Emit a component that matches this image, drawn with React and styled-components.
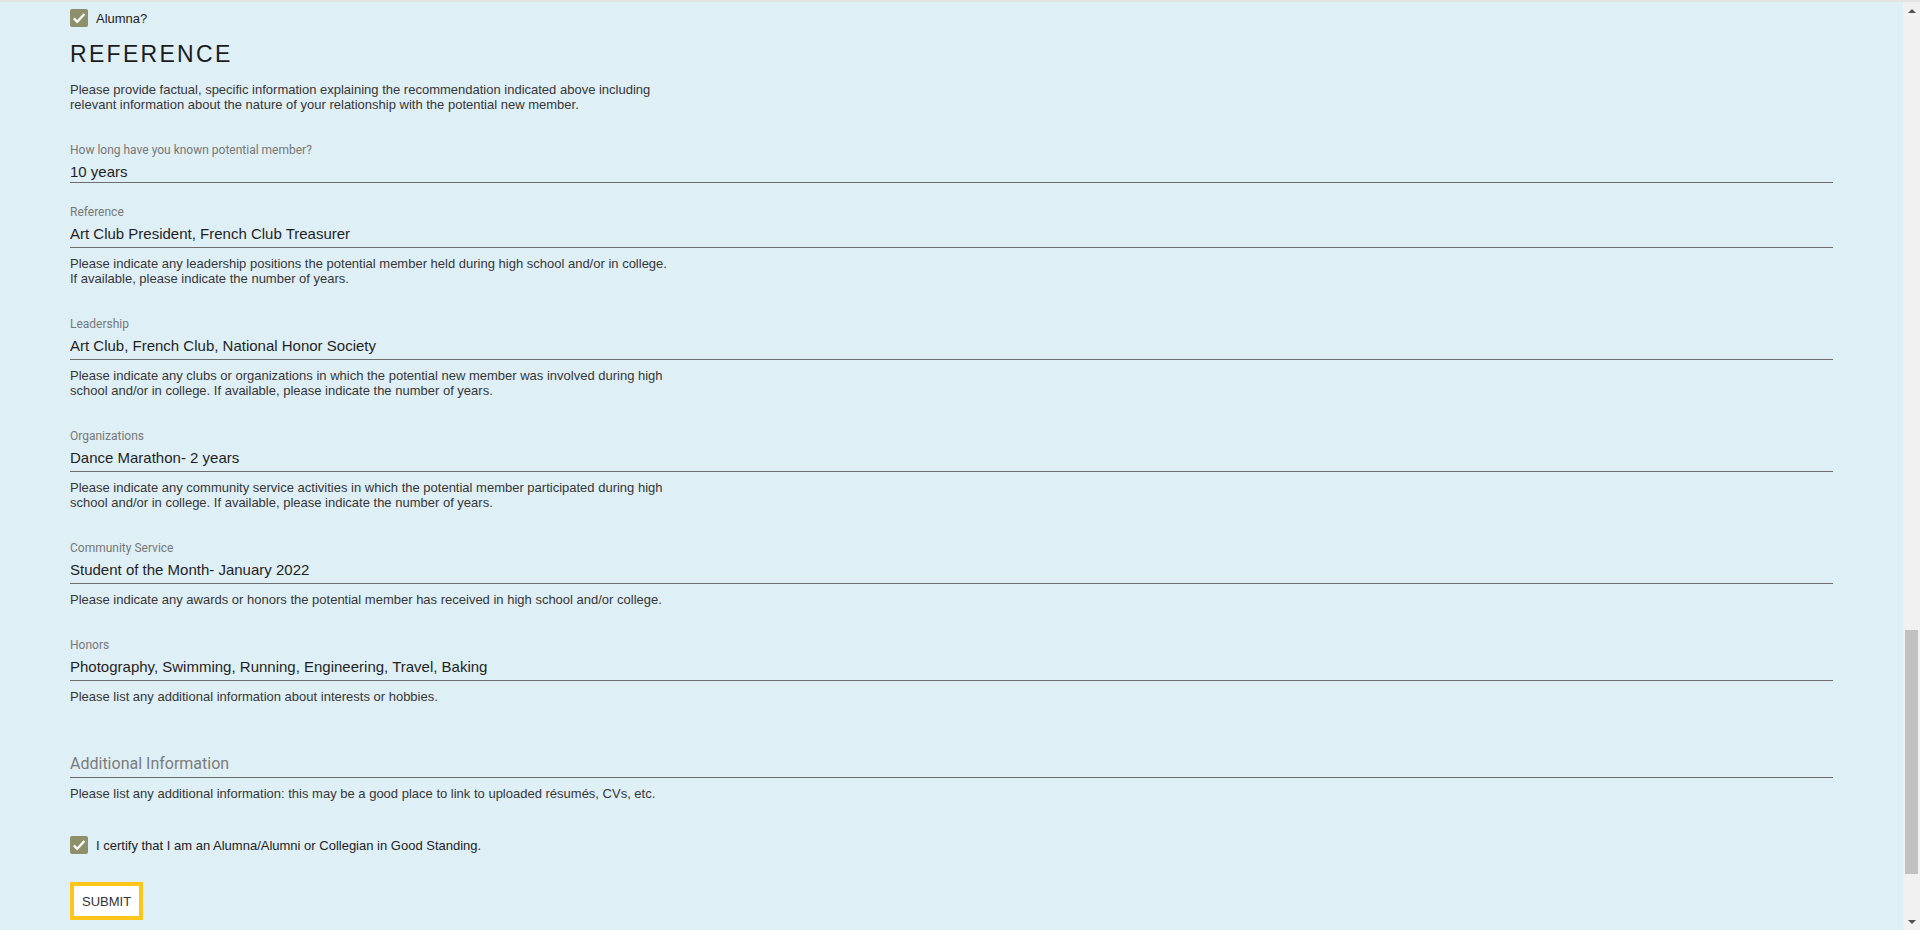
import React from "react";
import styled, { createGlobalStyle } from "styled-components";

const GlobalStyle = createGlobalStyle`
  html, body {
    margin: 0;
    padding: 0;
    overflow: hidden;
  }
  body {
    font-family: "Liberation Sans", Arial, sans-serif;
  }
  * {
    box-sizing: border-box;
  }
`;

const Page = styled.div`
  display: flex;
  height: 930px;
  border-top: 2px solid #e3e3e3;
`;

const Main = styled.main`
  flex: 1;
  background: #dfeff6;
  padding: 7px 70px 0;
  overflow: hidden;
`;

const CheckRow = styled.label`
  display: flex;
  align-items: center;
  gap: 8px;
  height: 18px;
  margin-top: ${(p) => p.$mt || 0}px;
  font-size: 13px;
  color: #222;
  cursor: pointer;
`;

const Box = styled.span`
  width: 18px;
  height: 18px;
  flex: none;
  border-radius: 2px;
  background: #8e906b;
  display: flex;
  align-items: center;
  justify-content: center;
`;

const Heading = styled.h2`
  margin: 13px 0 0;
  font-size: 23px;
  line-height: 28px;
  font-weight: 400;
  letter-spacing: 2.3px;
  color: #1b1b1b;
`;

const Help = styled.p`
  margin: ${(p) => p.$mt || 8}px 0 0;
  font-size: 13px;
  line-height: 15px;
  color: #363636;
`;

const Field = styled.div`
  display: flex;
  flex-direction: column;
  margin-top: ${(p) => p.$mt}px;
`;

const Label = styled.label`
  display: block;
  min-height: 15px;
  font-family: Roboto, "Liberation Sans", sans-serif;
  font-size: 12px;
  line-height: 15px;
  color: #777;
`;

const Input = styled.input`
  display: block;
  width: 100%;
  height: 20px;
  margin: 0;
  padding: 4px 0 ${(p) => (p.$compact ? 0 : 3)}px;
  border: 0;
  border-bottom: 1px solid #6e6e6e;
  border-radius: 0;
  background: transparent;
  font-family: "Liberation Sans", Arial, sans-serif;
  font-size: 15px;
  line-height: 20px;
  color: #1f1f1f;
  outline: none;
  box-sizing: content-box;

  &::placeholder {
    font-family: Roboto, "Liberation Sans", sans-serif;
    font-size: 16px;
    color: #7b7b7b;
    opacity: 1;
  }
`;

const Submit = styled.button`
  display: block;
  margin-top: 28px;
  height: 38px;
  padding: 0 8px;
  border: 4px solid #fec51b;
  background: #fff;
  font-family: "Liberation Sans", Arial, sans-serif;
  font-size: 13px;
  color: #333;
  cursor: pointer;
`;

const Scrollbar = styled.div`
  width: 17px;
  flex: none;
  background: #f1f1f1;
  display: flex;
  flex-direction: column;
`;

const Arrow = styled.div`
  height: 17px;
  display: flex;
  align-items: center;
  justify-content: center;

  &::before {
    content: "";
    border-left: 4px solid transparent;
    border-right: 4px solid transparent;
    ${(p) =>
      p.$down
        ? "border-top: 4px solid #505050;"
        : "border-bottom: 4px solid #505050;"}
  }
`;

const Track = styled.div`
  flex: 1;
  display: flex;
  flex-direction: column;
`;

const Thumb = styled.div`
  height: 244px;
  margin: auto 2px 39px;
  background: #c1c1c1;
`;

function Checkbox({ children, mt }) {
  return (
    <CheckRow $mt={mt}>
      <Box>
        <svg width="18" height="18" viewBox="0 0 18 18">
          <polyline
            points="3.8,9.4 7.2,12.8 14.4,5"
            fill="none"
            stroke="#fff"
            strokeWidth="2.2"
          />
        </svg>
      </Box>
      {children}
    </CheckRow>
  );
}

function Lines({ lines }) {
  return lines.map((line, i) => (
    <React.Fragment key={i}>
      {i > 0 && <br />}
      {line}
    </React.Fragment>
  ));
}

const fields = [
  {
    label: "Reference",
    value: "Art Club President, French Club Treasurer",
    help: [
      "Please indicate any leadership positions the potential member held during high school and/or in college.",
      "If available, please indicate the number of years.",
    ],
  },
  {
    label: "Leadership",
    value: "Art Club, French Club, National Honor Society",
    help: [
      "Please indicate any clubs or organizations in which the potential new member was involved during high",
      "school and/or in college. If available, please indicate the number of years.",
    ],
  },
  {
    label: "Organizations",
    value: "Dance Marathon- 2 years",
    help: [
      "Please indicate any community service activities in which the potential member participated during high",
      "school and/or in college. If available, please indicate the number of years.",
    ],
  },
  {
    label: "Community Service",
    value: "Student of the Month- January 2022",
    help: [
      "Please indicate any awards or honors the potential member has received in high school and/or college.",
    ],
  },
  {
    label: "Honors",
    value: "Photography, Swimming, Running, Engineering, Travel, Baking",
    help: ["Please list any additional information about interests or hobbies."],
  },
  {
    label: "",
    placeholder: "Additional Information",
    help: [
      "Please list any additional information: this may be a good place to link to uploaded résumés, CVs, etc.",
    ],
  },
];

export default function App() {
  return (
    <>
      <GlobalStyle />
      <Page>
        <Main>
          <Checkbox>Alumna?</Checkbox>
          <Heading>REFERENCE</Heading>
          <Help $mt={14}>
            <Lines
              lines={[
                "Please provide factual, specific information explaining the recommendation indicated above including",
                "relevant information about the nature of your relationship with the potential new member.",
              ]}
            />
          </Help>

          <Field $mt={31}>
            <Label>How long have you known potential member?</Label>
            <Input $compact readOnly defaultValue="10 years" />
          </Field>

          {fields.map((f, i) => (
            <Field key={f.placeholder || f.label} $mt={i === 0 ? 22 : 31}>
              <Label>{f.label}</Label>
              <Input
                readOnly={!f.placeholder}
                defaultValue={f.value}
                placeholder={f.placeholder}
              />
              <Help>
                <Lines lines={f.help} />
              </Help>
            </Field>
          ))}

          <Checkbox mt={35}>
            I certify that I am an Alumna/Alumni or Collegian in Good Standing.
          </Checkbox>
          <Submit type="button">SUBMIT</Submit>
        </Main>
        <Scrollbar>
          <Arrow />
          <Track>
            <Thumb />
          </Track>
          <Arrow $down />
        </Scrollbar>
      </Page>
    </>
  );
}
